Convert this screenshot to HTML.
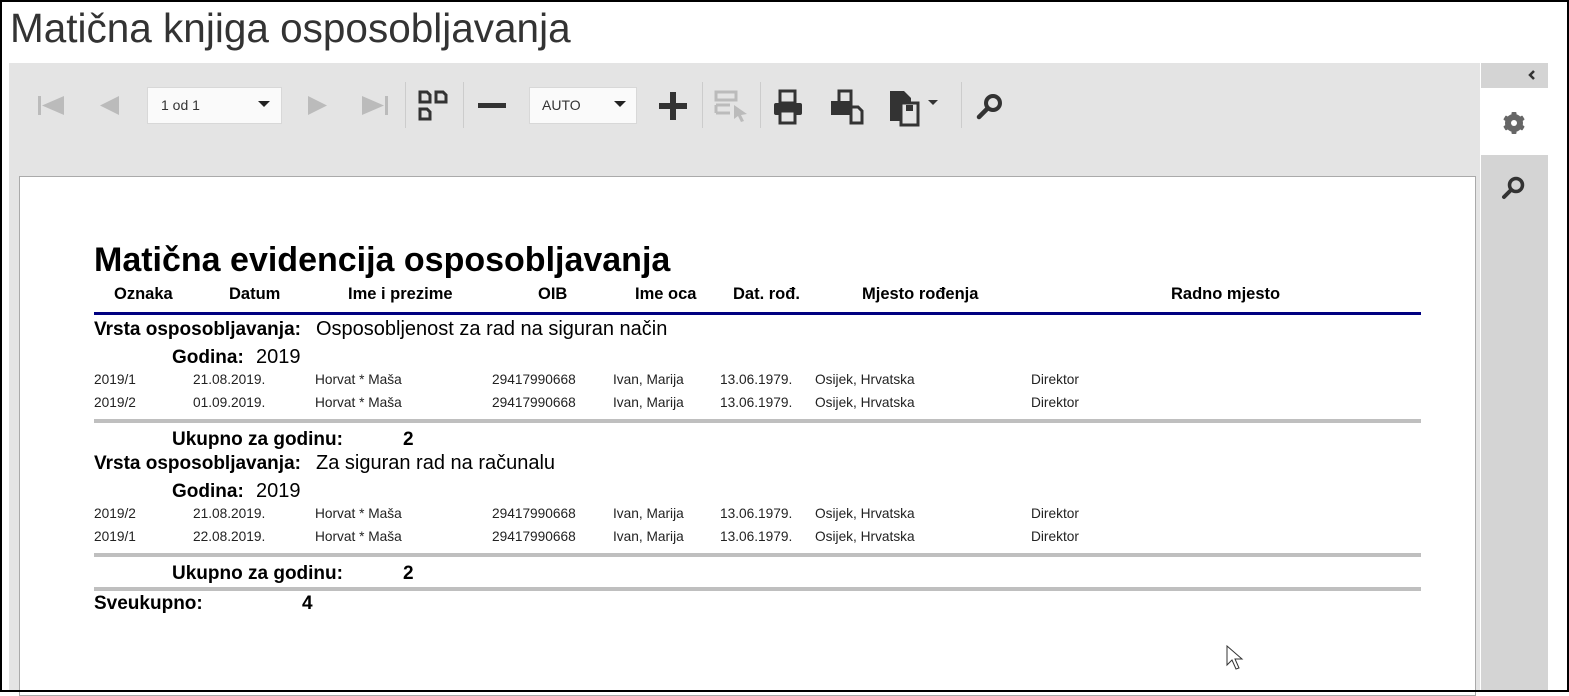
<!DOCTYPE html>
<html><head><meta charset="utf-8"><style>
*{margin:0;padding:0;box-sizing:border-box}
body{width:1569px;height:692px;overflow:hidden;background:#fff;font-family:"Liberation Sans",Arial,sans-serif;position:relative}
.frame{position:absolute;left:0;top:0;width:1569px;height:692px;border:2px solid #000;z-index:5;pointer-events:none}
.a{position:absolute;white-space:nowrap}
.t{position:absolute;white-space:nowrap;line-height:1}
.h{font-size:16.5px;font-weight:bold;color:#000}
.d{font-size:13.7px;color:#222}
.sep{position:absolute;width:1px;height:46px;top:82px;background:#ccc}
.gl{position:absolute;left:94px;width:1327px;height:4px;background:#bfbfbf}
.b{font-size:19px;font-weight:bold}
</style></head><body>
<div class="frame"></div>
<div class="t" style="left:10px;top:8px;font-size:40.5px;color:#333">Matična knjiga osposobljavanja</div>
<!-- toolbar -->
<div class="a" style="left:9px;top:63px;width:1471px;height:629px;background:#e4e4e4"></div>
<div class="a" style="left:1481px;top:63px;width:67px;height:25px;background:#d4d4d4"></div>
<div class="a" style="left:1481px;top:155px;width:67px;height:537px;background:#d4d4d4"></div>
<div class="a" style="left:1481px;top:88px;width:67px;height:67px;background:#fff"></div>
<svg class="a" style="left:1526px;top:68px" width="12" height="14" viewBox="0 0 12 14"><path d="M8 3 L4 7 L8 11" stroke="#333" stroke-width="2.5" fill="none"/></svg>
<svg class="a" style="left:1500px;top:109px" width="28" height="28" viewBox="0 0 28 28"><g fill="#666"><circle cx="14" cy="14" r="9"/><rect x="11.5" y="3" width="5" height="22" rx="1"/><rect x="11.5" y="3" width="5" height="22" rx="1" transform="rotate(60 14 14)"/><rect x="11.5" y="3" width="5" height="22" rx="1" transform="rotate(120 14 14)"/></g><circle cx="14" cy="14" r="3" fill="#fff"/></svg>
<svg class="a" style="left:1500px;top:174px" width="28" height="28" viewBox="0 0 28 28"><circle cx="16" cy="11" r="6.5" stroke="#333" stroke-width="3.5" fill="none"/><path d="M11 16 L4 23" stroke="#333" stroke-width="4" stroke-linecap="round"/></svg>

<svg class="a" style="left:36px;top:93px" width="30" height="26"><rect x="2" y="3" width="3" height="19" fill="#bbb"/><path d="M6 12.5 L28 3 L28 22Z" fill="#bbb"/></svg>
<svg class="a" style="left:98px;top:93px" width="24" height="26"><path d="M2 12.5 L21 3 L21 22Z" fill="#bbb"/></svg>
<div class="a" style="left:147px;top:87px;width:135px;height:37px;background:#fafafa;border:1px solid #d8d8d8"></div>
<div class="t" style="left:161px;top:98px;font-size:14px;color:#333">1 od 1</div>
<svg class="a" style="left:258px;top:101px" width="12" height="8"><path d="M0 0 L12 0 L6 6Z" fill="#222"/></svg>
<svg class="a" style="left:305px;top:93px" width="24" height="26"><path d="M3 3 L22 12.5 L3 22Z" fill="#bbb"/></svg>
<svg class="a" style="left:360px;top:93px" width="30" height="26"><path d="M2 3 L24 12.5 L2 22Z" fill="#bbb"/><rect x="25" y="3" width="3" height="19" fill="#bbb"/></svg>
<div class="sep" style="left:405px"></div>
<svg class="a" style="left:418px;top:90px" width="32" height="32"><g fill="none" stroke="#333" stroke-width="3"><path d="M2 2 H9 L12 5 V12 H2Z"/><path d="M18 2 H25 L28 5 V12 H18Z"/><path d="M2 19 H9 L12 22 V29 H2Z"/></g></svg>
<div class="sep" style="left:463px"></div>
<div class="a" style="left:478px;top:103px;width:28px;height:5px;background:#333"></div>
<div class="a" style="left:529px;top:87px;width:108px;height:37px;background:#fafafa;border:1px solid #d8d8d8"></div>
<div class="t" style="left:542px;top:98px;font-size:14px;color:#333">AUTO</div>
<svg class="a" style="left:614px;top:101px" width="12" height="8"><path d="M0 0 L12 0 L6 6Z" fill="#222"/></svg>
<svg class="a" style="left:657px;top:90px" width="32" height="32"><rect x="13" y="2" width="6" height="28" fill="#333"/><rect x="2" y="13" width="28" height="6" fill="#333"/></svg>
<div class="sep" style="left:702px"></div>
<svg class="a" style="left:714px;top:90px" width="36" height="34"><g fill="none" stroke="#bbb" stroke-width="3"><rect x="2" y="2" width="20" height="8"/><path d="M2 15 H16 M2 23 H16 M2 15 V23"/></g><path d="M20 15 L33 24 L27 25 L30 31 L27 32 L24 26 L20 29Z" fill="#bbb"/></svg>
<div class="sep" style="left:760px"></div>
<svg class="a" style="left:772px;top:89px" width="32" height="36"><g fill="#333"><rect x="8" y="2" width="15" height="12" fill="none" stroke="#333" stroke-width="3"/><rect x="2" y="14" width="28" height="12" rx="2"/><rect x="8" y="22" width="15" height="12" fill="#e4e4e4" stroke="#333" stroke-width="3"/></g></svg>
<svg class="a" style="left:829px;top:89px" width="36" height="36"><rect x="10" y="2" width="12" height="13" fill="none" stroke="#333" stroke-width="3"/><rect x="2" y="12" width="20" height="14" fill="#333"/><path d="M22 18 H29 L33 22 V34 H22Z" fill="#e4e4e4" stroke="#333" stroke-width="3"/></svg>
<svg class="a" style="left:888px;top:89px" width="56" height="38"><path d="M2 2 H16 L23 9 V32 H2Z" fill="#333"/><path d="M13 14 H30 V36 H13Z" fill="#e4e4e4" stroke="#333" stroke-width="3"/><rect x="18" y="16" width="7" height="6" fill="#333"/><path d="M40 11 H50 L45 16Z" fill="#333"/></svg>
<div class="sep" style="left:961px"></div>
<svg class="a" style="left:975px;top:91px" width="30" height="30"><circle cx="18" cy="12" r="7" stroke="#333" stroke-width="4" fill="none"/><path d="M12 18 L4 26" stroke="#333" stroke-width="4.5" stroke-linecap="round"/></svg>

<!-- page -->
<div class="a" style="left:19px;top:176px;width:1457px;height:520px;background:#fff;border:1px solid #aaa"></div>
<div class="t" style="left:94px;top:243px;font-size:34px;font-weight:bold;color:#000">Matična evidencija osposobljavanja</div>
<div class="t h" style="left:114px;top:286px">Oznaka</div>
<div class="t h" style="left:229px;top:286px">Datum</div>
<div class="t h" style="left:348px;top:286px">Ime i prezime</div>
<div class="t h" style="left:538px;top:286px">OIB</div>
<div class="t h" style="left:635px;top:286px">Ime oca</div>
<div class="t h" style="left:733px;top:286px">Dat. rođ.</div>
<div class="t h" style="left:862px;top:286px">Mjesto rođenja</div>
<div class="t h" style="left:1171px;top:286px">Radno mjesto</div>
<div class="a" style="left:94px;top:312px;width:1327px;height:3px;background:#000080"></div>

<div class="t b" style="left:94px;top:320px">Vrsta osposobljavanja:</div>
<div class="t" style="left:316px;top:319px;font-size:20px">Osposobljenost za rad na siguran način</div>
<div class="t b" style="left:172px;top:348px">Godina:</div>
<div class="t" style="left:256px;top:347px;font-size:20px">2019</div>
<div class="t d" style="left:94px;top:373px">2019/1</div><div class="t d" style="left:193px;top:373px">21.08.2019.</div><div class="t d" style="left:315px;top:373px">Horvat * Maša</div><div class="t d" style="left:492px;top:373px">29417990668</div><div class="t d" style="left:613px;top:373px">Ivan, Marija</div><div class="t d" style="left:720px;top:373px">13.06.1979.</div><div class="t d" style="left:815px;top:373px">Osijek, Hrvatska</div><div class="t d" style="left:1031px;top:373px">Direktor</div>
<div class="t d" style="left:94px;top:396px">2019/2</div><div class="t d" style="left:193px;top:396px">01.09.2019.</div><div class="t d" style="left:315px;top:396px">Horvat * Maša</div><div class="t d" style="left:492px;top:396px">29417990668</div><div class="t d" style="left:613px;top:396px">Ivan, Marija</div><div class="t d" style="left:720px;top:396px">13.06.1979.</div><div class="t d" style="left:815px;top:396px">Osijek, Hrvatska</div><div class="t d" style="left:1031px;top:396px">Direktor</div>
<div class="gl" style="top:419px"></div>
<div class="t b" style="left:172px;top:430px">Ukupno za godinu:</div>
<div class="t b" style="left:403px;top:430px">2</div>

<div class="t b" style="left:94px;top:454px">Vrsta osposobljavanja:</div>
<div class="t" style="left:316px;top:453px;font-size:20px">Za siguran rad na računalu</div>
<div class="t b" style="left:172px;top:482px">Godina:</div>
<div class="t" style="left:256px;top:481px;font-size:20px">2019</div>
<div class="t d" style="left:94px;top:507px">2019/2</div><div class="t d" style="left:193px;top:507px">21.08.2019.</div><div class="t d" style="left:315px;top:507px">Horvat * Maša</div><div class="t d" style="left:492px;top:507px">29417990668</div><div class="t d" style="left:613px;top:507px">Ivan, Marija</div><div class="t d" style="left:720px;top:507px">13.06.1979.</div><div class="t d" style="left:815px;top:507px">Osijek, Hrvatska</div><div class="t d" style="left:1031px;top:507px">Direktor</div>
<div class="t d" style="left:94px;top:530px">2019/1</div><div class="t d" style="left:193px;top:530px">22.08.2019.</div><div class="t d" style="left:315px;top:530px">Horvat * Maša</div><div class="t d" style="left:492px;top:530px">29417990668</div><div class="t d" style="left:613px;top:530px">Ivan, Marija</div><div class="t d" style="left:720px;top:530px">13.06.1979.</div><div class="t d" style="left:815px;top:530px">Osijek, Hrvatska</div><div class="t d" style="left:1031px;top:530px">Direktor</div>
<div class="gl" style="top:553px"></div>
<div class="t b" style="left:172px;top:564px">Ukupno za godinu:</div>
<div class="t b" style="left:403px;top:564px">2</div>
<div class="gl" style="top:587px"></div>
<div class="t b" style="left:94px;top:594px">Sveukupno:</div>
<div class="t b" style="left:302px;top:594px">4</div>
<svg class="a" style="left:1226px;top:645px" width="20" height="26"><path d="M1 1 L1 20 L6 15 L10 24 L13 23 L9 14 L16 14Z" fill="#fff" stroke="#333" stroke-width="1"/></svg>
</body></html>
